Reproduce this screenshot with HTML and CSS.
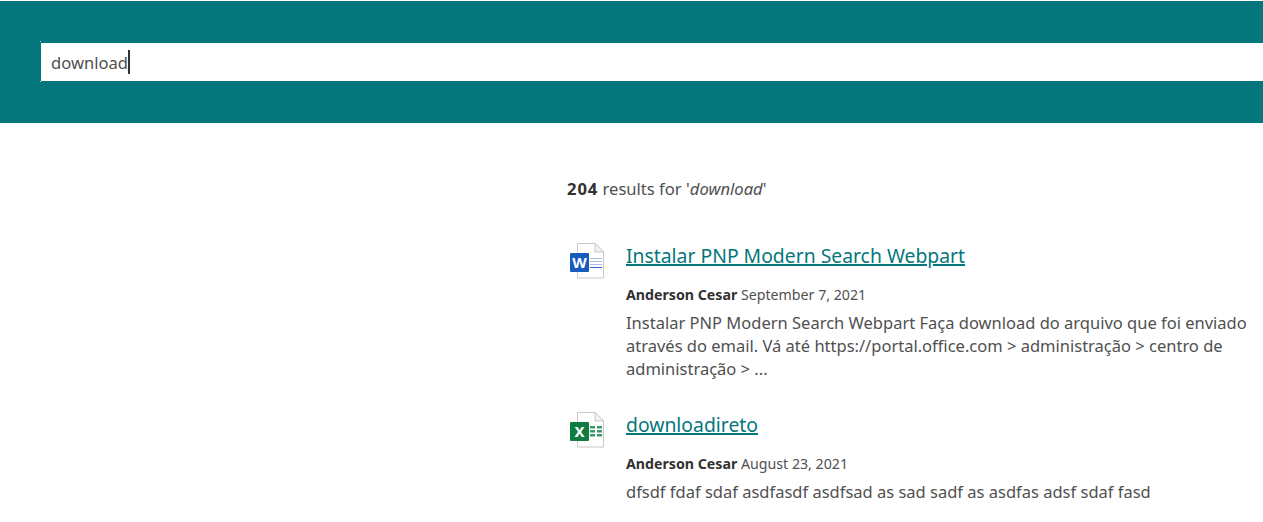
FILE: index.html
```
<!DOCTYPE html>
<html lang="pt">
<head>
<meta charset="utf-8">
<title>Search</title>
<link rel="stylesheet" href="styles.css">
</head>
<body>
<header class="hero">
  <div class="searchbox"><span class="query">download</span><span class="caret"></span></div>
</header>
<main class="content">
  <p class="summary"><strong>204</strong> results for '<em>download</em>'</p>
  <article class="result">
    <svg class="fileicon" viewBox="0 0 35 36" width="35" height="36" aria-hidden="true">
      <path d="M7.5.5H25L33.500 9v26H7.500z" fill="#fff" stroke="#c8c8c8"/>
      <path d="M25 .5V9h8.500z" fill="#f3f3f3" stroke="#c8c8c8"/>
      <rect x="0" y="10" width="19" height="19" rx="1" fill="#185abd"/>
      <text x="9.500" y="24.500" class="glyph" text-anchor="middle">W</text>
      <path d="M20 15.500h12M20 18.500h12M20 21.500h12" stroke="#a5c0e8" stroke-width="1"/>
      <path d="M20 24.500h12" stroke="#2b6fd0" stroke-width="1"/>
    </svg>
    <div class="body">
      <h2 class="title"><a href="#">Instalar PNP Modern Search Webpart</a></h2>
      <p class="meta"><strong>Anderson Cesar</strong> September 7, 2021</p>
      <p class="desc">Instalar PNP Modern Search Webpart Faça download do arquivo que foi enviado através do email. Vá até https://portal.office.com &gt; administração &gt; centro de administração &gt; ...</p>
    </div>
  </article>
  <article class="result">
    <svg class="fileicon" viewBox="0 0 35 36" width="35" height="36" aria-hidden="true">
      <path d="M7.5.5H25L33.500 9v26H7.500z" fill="#fff" stroke="#c8c8c8"/>
      <path d="M25 .5V9h8.500z" fill="#f3f3f3" stroke="#c8c8c8"/>
      <rect x="0" y="10" width="19" height="19" rx="1" fill="#107c41"/>
      <text x="9.500" y="24.500" class="glyph" text-anchor="middle">X</text>
      <path d="M20 14h5v2.500h-5zM27 14h5v2.500h-5zM20 18h5v2.500h-5zM27 18h5v2.500h-5zM20 22h5v2.500h-5zM27 22h5v2.500h-5z" fill="#3a9a68"/>
    </svg>
    <div class="body">
      <h2 class="title"><a href="#">downloadireto</a></h2>
      <p class="meta"><strong>Anderson Cesar</strong> August 23, 2021</p>
      <p class="desc">dfsdf fdaf sdaf asdfasdf asdfsad as sad sadf as asdfas adsf sdaf fasd</p>
    </div>
  </article>
</main>
</body>
</html>
```
FILE: styles.css
```
* { box-sizing: border-box; }
html, body { margin: 0; height: 522px; overflow: hidden; background: #fff; }
body { font-family: "Noto Sans", "Open Sans", sans-serif; color: #323130; }
.hero { height: 122px; margin-top: 1px; background: #04777c; padding: 42px 0 0 41px; }
.searchbox { position: relative; height: 38px; background: #fff; display: flex; align-items: center; padding-left: 10px; font-size: 16.6px; color: #505050; }
.searchbox::before, .searchbox::after { content: ""; position: absolute; left: -1px; width: 1px; height: 1px; background: #b5d3d5; }
.searchbox::before { top: -2px; }
.searchbox::after { bottom: -1px; }
.caret { width: 2px; height: 24px; background: #323130; }
.content { padding: 54px 0 0 567px; }
.summary { margin: 0; font-size: 16.6px; line-height: 24px; color: #505050; }
.summary strong { color: #323130; letter-spacing: .9px; }
.result { display: flex; margin-top: 29px; }
.result + .result { margin-top: 19px; }
.fileicon { flex: none; margin: 13px 21px 0 3px; }
.body { flex: 1; padding-top: 12px; padding-right: 10px; }
.title { margin: 0; font-size: 19.35px; font-weight: 400; line-height: 28px; }
.title a { color: #04777c; text-decoration-thickness: 2px; }
.meta { margin: 15px 0 0; font-size: 14.2px; line-height: 20px; color: #505050; }
.meta strong { color: #323130; }
.desc { margin: 6px 0 0; font-size: 16.5px; line-height: 23px; color: #505050; }
.glyph { font: 700 15px "Noto Sans", sans-serif; fill: #fff; }
```
